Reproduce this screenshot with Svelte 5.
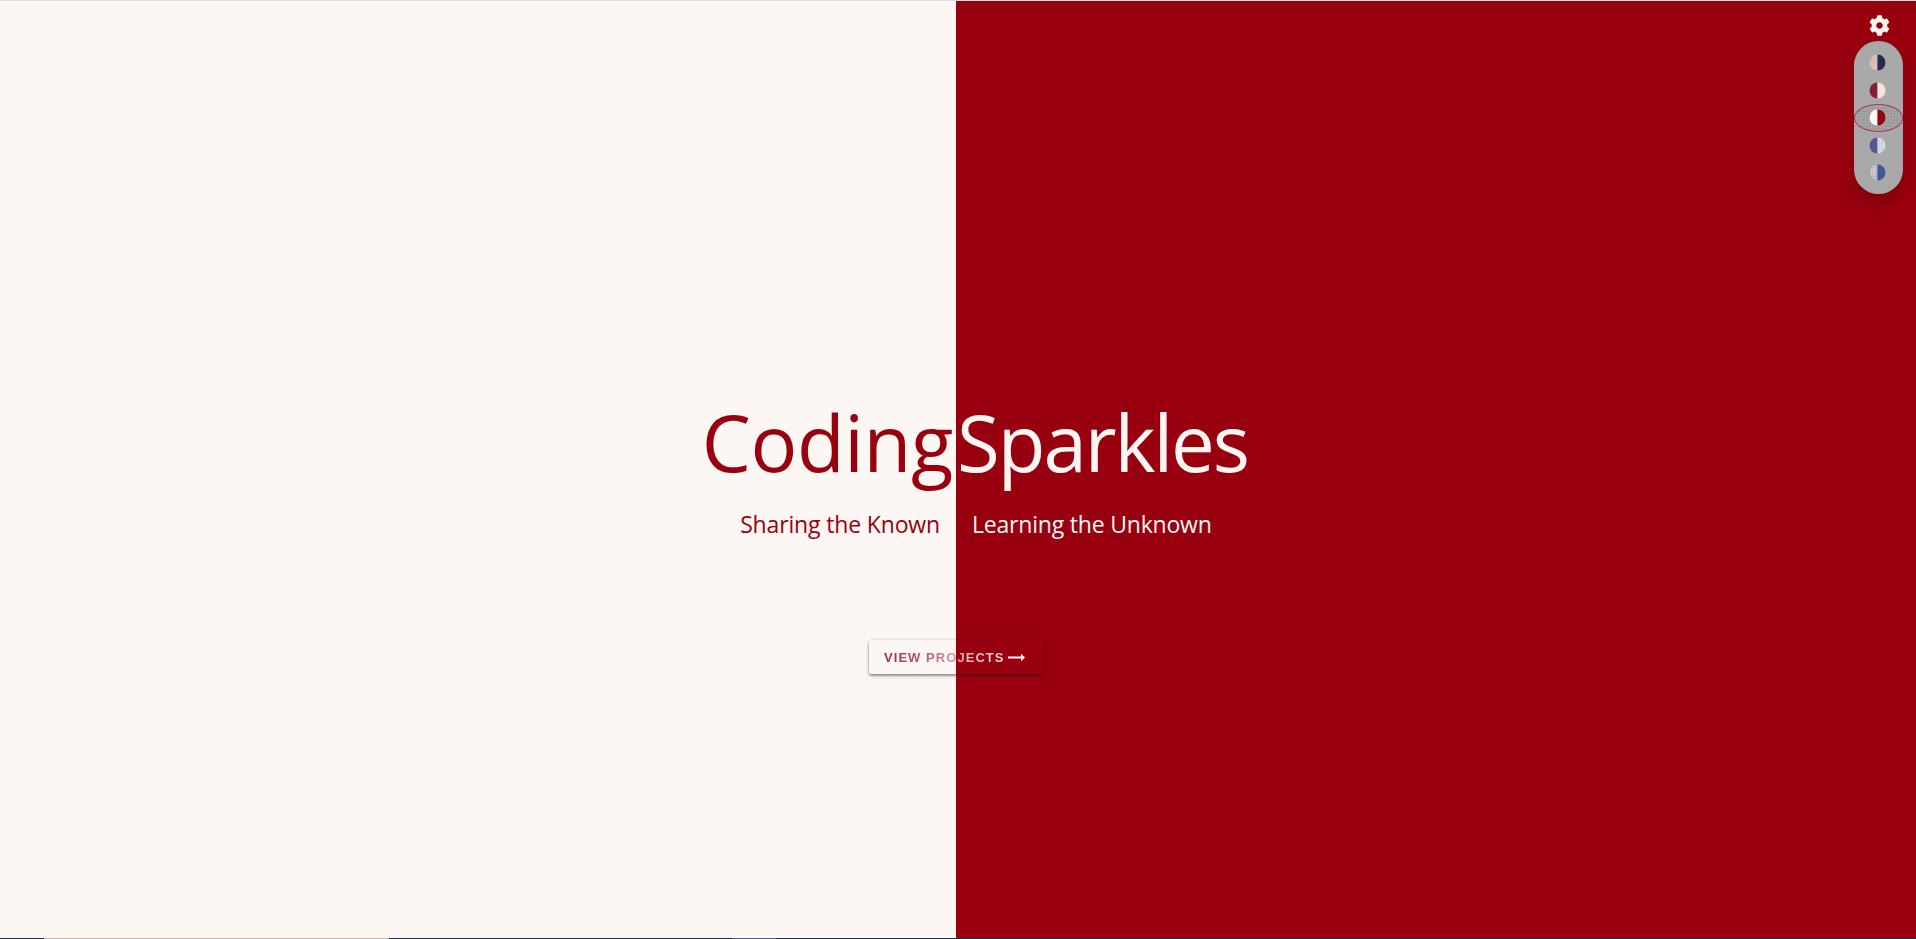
<script>
  const themes = [
    { id: 'a', left: '#e2c6c4', right: '#1d2b4c', dotL: '#cfa09c', dotR: '#5e2a4a', size: 2 },
    { id: 'b', left: '#a81c30', right: '#f6e4dc', dotL: '#25284f', dotR: '#f6e4dc', size: 2 },
    { id: 'c', left: '#fdf7f4', right: '#98000f', dotL: '#fdf7f4', dotR: '#98000f', size: 2, active: true },
    { id: 'd', left: '#4a5a9c', right: '#d5d9e3', dotL: '#a83a5c', dotR: '#a4aabd', size: 3 },
    { id: 'e', left: '#b0b2b6', right: '#41599c', dotL: '#f5f5f5', dotR: '#41599c', size: 2, gap: true }
  ];
</script>

<main class="page">
  <div class="top-line"></div>
  <div class="split">
    <section class="half left">
      <h1>Coding</h1>
      <p>Sharing the Known</p>
    </section>
    <section class="half right">
      <h1>Sparkles</h1>
      <p>Learning the Unknown</p>
    </section>
  </div>
  <div class="bottom-line">
    <span class="s1"></span><span class="s2"></span><span class="s3"></span><span class="s4"></span><span class="s5"></span>
  </div>

  <button class="cta" type="button">
    <span class="cta-text">VIEW PROJECTS</span>
    <svg width="17" height="9" viewBox="0 0 17 9" aria-hidden="true">
      <path d="M0 3.400h13V0.700L17 4.500l-4 3.800V5.600H0z" fill="#fff" />
    </svg>
  </button>

  <aside class="settings">
    <svg class="gear" viewBox="0 0 512 512" width="21" height="21" aria-hidden="true">
      <path fill="#fdf7f4" d="M487.4 315.7l-42.6-24.6c4.300-23.200 4.300-47 0-70.200l42.600-24.600c4.900-2.800 7.100-8.600 5.500-14-11.100-35.600-30-67.800-54.700-94.600-3.800-4.100-10-5.100-14.800-2.300L380.800 110c-17.900-15.400-38.500-27.300-60.800-35.100V25.800c0-5.600-3.900-10.500-9.400-11.700-36.700-8.200-74.300-7.800-109.200 0-5.500 1.200-9.400 6.100-9.400 11.700V75c-22.200 7.900-42.800 19.800-60.800 35.100L88.700 85.500c-4.900-2.800-11-1.900-14.800 2.300-24.700 26.700-43.600 58.900-54.700 94.600-1.700 5.400.6 11.200 5.500 14L67.300 221c-4.300 23.200-4.300 47 0 70.200l-42.600 24.600c-4.900 2.800-7.100 8.600-5.500 14 11.100 35.600 30 67.800 54.700 94.600 3.800 4.100 10 5.100 14.800 2.300l42.600-24.600c17.900 15.400 38.500 27.300 60.800 35.100v49.200c0 5.600 3.900 10.500 9.400 11.700 36.700 8.200 74.300 7.800 109.200 0 5.500-1.200 9.400-6.100 9.400-11.700v-49.200c22.200-7.900 42.800-19.800 60.800-35.100l42.600 24.600c4.900 2.800 11 1.900 14.800-2.300 24.700-26.700 43.600-58.900 54.700-94.600 1.500-5.500-.7-11.300-5.600-14.100zM256 336c-44.100 0-80-35.900-80-80s35.900-80 80-80 80 35.900 80 80-35.900 80-80 80z" />
    </svg>
    <div class="pill">
      {#each themes as t}
        <div class="option" class:active={t.active}>
          <svg viewBox="0 0 16 16" width="17" height="17" aria-hidden="true">
            <defs>
              <pattern id="l-{t.id}" width={t.size} height={t.size} patternUnits="userSpaceOnUse">
                <rect width={t.size} height={t.size} fill={t.left} />
                <rect width="1" height="1" fill={t.dotL} />
              </pattern>
              <pattern id="r-{t.id}" width="3" height="3" patternUnits="userSpaceOnUse">
                <rect width="3" height="3" fill={t.right} />
                <rect width="1" height="1" fill={t.dotR} />
              </pattern>
            </defs>
            <path d={t.gap ? 'M7 .8a7.500 7.500 0 0 0 0 14.400z' : 'M8 .5a7.500 7.500 0 0 0 0 15z'} fill="url(#l-{t.id})" />
            <path d="M8 .5a7.500 7.500 0 0 1 0 15z" fill="url(#r-{t.id})" />
          </svg>
        </div>
      {/each}
    </div>
  </aside>
</main>

<style>
  :global(body) {
    margin: 0;
    overflow: hidden;
  }

  .page {
    position: relative;
    height: 939px;
    display: flex;
    flex-direction: column;
    background: #fdf7f4;
    font-family: "Open Sans", "Noto Sans", sans-serif;
  }

  .top-line {
    height: 1px;
    background: #dfe1e8;
  }

  .bottom-line {
    height: 1px;
    display: flex;
  }
  .s1 { width: 44px; background: #27324a; }
  .s2 { width: 345px; background: #cdb6b4; }
  .s3 { width: 343px; background: #27324a; }
  .s4 { width: 44px; background: #4f5f96; }
  .s5 { flex: 1; background: #1d2b4c; }

  .split {
    flex: 1;
    display: grid;
    grid-template-columns: 956px 1fr;
  }

  .half {
    padding-top: 389px;
  }

  .left {
    background: #fdf7f4;
    color: #98000f;
    text-align: right;
  }

  .right {
    background: #98000f;
    color: #fdf7f4;
    text-align: left;
  }

  h1 {
    margin: 0;
    font-size: 78px;
    line-height: 104px;
    font-weight: 400;
  }

  .left h1 { padding-right: 3px; letter-spacing: -0.4px; }
  .right h1 { padding-left: 1px; letter-spacing: -2.05px; }

  p {
    margin: 0;
    padding-top: 15px;
    font-size: 23px;
    line-height: 30px;
    font-weight: 400;
  }

  .left p { padding-right: 16px; letter-spacing: -0.15px; }
  .right p { padding-left: 16px; letter-spacing: -0.2px; }

  .cta {
    position: absolute;
    left: 869px;
    top: 640px;
    width: 175px;
    height: 34px;
    padding: 0 0 0 15px;
    display: flex;
    align-items: center;
    gap: 3px;
    border: none;
    border-radius: 3px;
    background: linear-gradient(to right, #fdf7f4 87px, #98000f 87px);
    box-shadow: 0 2px 3px rgba(40, 20, 30, 0.45), 0 0 3px rgba(40, 20, 30, 0.2);
    font-family: "Liberation Sans", Arial, sans-serif;
    font-size: 13px;
    font-weight: 700;
    letter-spacing: 1.05px;
  }

  .cta-text {
    background: linear-gradient(to right, #ac2342 0%, #c4607a 40%, #e6b8bc 70%, #f2dcdc 100%);
    -webkit-background-clip: text;
    background-clip: text;
    color: transparent;
  }

  .settings {
    position: absolute;
    top: 15px;
    left: 1854px;
    width: 49px;
    display: flex;
    flex-direction: column;
    align-items: center;
    gap: 5px;
  }

  .gear {
    margin-left: 1px;
  }

  .pill {
    width: 49px;
    height: 153px;
    padding-top: 8px;
    box-sizing: border-box;
    border-radius: 24.5px;
    background: #a9a9a9;
    box-shadow: 0 8px 14px rgba(60, 0, 0, 0.28);
    display: flex;
    flex-direction: column;
    align-items: center;
  }

  .option {
    width: 49px;
    height: 27.5px;
    flex: none;
    box-sizing: border-box;
    display: flex;
    align-items: center;
    justify-content: center;
    padding-right: 3px;
    border-radius: 50%;
  }

  .option.active {
    border: 1.5px solid #b5305f;
    background: radial-gradient(circle, #b4b4b4 1px, transparent 1px) 0 0 / 3px 3px, #9d9d9d;
  }
</style>
